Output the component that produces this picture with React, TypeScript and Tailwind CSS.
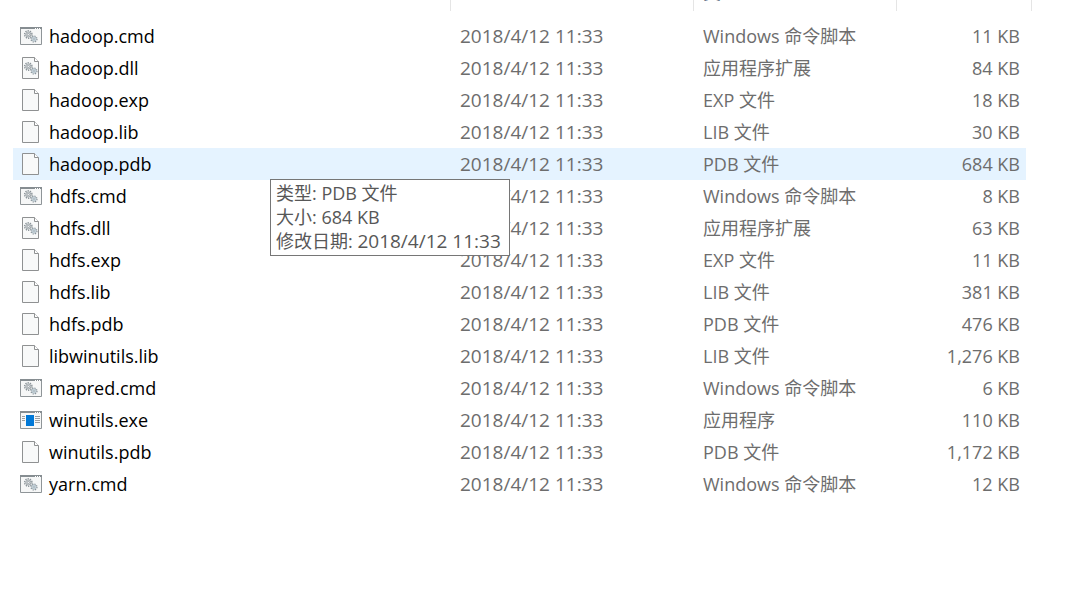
import React from 'react';

type FileKind = 'script' | 'library' | 'blank' | 'program';

interface FileRow {
  name: string;
  kind: FileKind;
  type: string;
  size: string;
}

const modified = '2018/4/12 11:33';

const files: FileRow[] = [
  { name: 'hadoop.cmd', kind: 'script', type: 'Windows 命令脚本', size: '11 KB' },
  { name: 'hadoop.dll', kind: 'library', type: '应用程序扩展', size: '84 KB' },
  { name: 'hadoop.exp', kind: 'blank', type: 'EXP 文件', size: '18 KB' },
  { name: 'hadoop.lib', kind: 'blank', type: 'LIB 文件', size: '30 KB' },
  { name: 'hadoop.pdb', kind: 'blank', type: 'PDB 文件', size: '684 KB' },
  { name: 'hdfs.cmd', kind: 'script', type: 'Windows 命令脚本', size: '8 KB' },
  { name: 'hdfs.dll', kind: 'library', type: '应用程序扩展', size: '63 KB' },
  { name: 'hdfs.exp', kind: 'blank', type: 'EXP 文件', size: '11 KB' },
  { name: 'hdfs.lib', kind: 'blank', type: 'LIB 文件', size: '381 KB' },
  { name: 'hdfs.pdb', kind: 'blank', type: 'PDB 文件', size: '476 KB' },
  { name: 'libwinutils.lib', kind: 'blank', type: 'LIB 文件', size: '1,276 KB' },
  { name: 'mapred.cmd', kind: 'script', type: 'Windows 命令脚本', size: '6 KB' },
  { name: 'winutils.exe', kind: 'program', type: '应用程序', size: '110 KB' },
  { name: 'winutils.pdb', kind: 'blank', type: 'PDB 文件', size: '1,172 KB' },
  { name: 'yarn.cmd', kind: 'script', type: 'Windows 命令脚本', size: '12 KB' },
];

const hovered = 'hadoop.pdb';

function Gears() {
  return (
    <g fill="none">
      <circle cx="8.3" cy="9.5" r="3.7" stroke="#8b9499" strokeWidth="1.4" strokeDasharray="1.3 1.02" />
      <circle cx="8.3" cy="9.5" r="2.6" fill="#d5d9db" stroke="#a0a7ab" />
      <circle cx="8.3" cy="9.5" r="1.1" fill="#f6f7f7" stroke="#8b9499" strokeWidth="0.7" />
      <circle cx="14" cy="14" r="3" stroke="#87939a" strokeWidth="1.2" strokeDasharray="1.3 1.06" />
      <circle cx="14" cy="14" r="2.2" fill="#dcecf5" stroke="#9aa6ad" strokeWidth="0.8" />
      <circle cx="14" cy="14" r="0.8" fill="#fff" stroke="#87939a" strokeWidth="0.6" />
    </g>
  );
}

function Page() {
  return (
    <>
      <path d="M2.5 0.5h12l4 4v17h-16z" fill="#f8f9f9" stroke="#8f9192" />
      <path d="M14.5 0.5v4h4" fill="#fff" stroke="#8f9192" />
    </>
  );
}

function Frame() {
  return (
    <>
      <path d="M0.5 2.5h21v17h-21z" fill="#f6f7f7" stroke="#8f9598" />
      <path d="M0 2h22v2H0z" fill="#868d91" />
      <path d="M15 3h1v1h-1zM17 3h1v1h-1zM19 3h1v1h-1z" fill="#fff" />
    </>
  );
}

function FileIcon({ kind }: { kind: FileKind }) {
  return (
    <svg width="22" height="22" viewBox="0 0 22 22" className="shrink-0" aria-hidden="true">
      {kind === 'blank' || kind === 'library' ? <Page /> : <Frame />}
      {(kind === 'script' || kind === 'library') && <Gears />}
      {kind === 'program' && (
        <>
          <path d="M6 6h8v11H6z" fill="#0078d7" />
          <path
            d="M2 7.5h3M2 9.5h3M2 11.5h3M15 7.5h5M15 9.5h5M15 11.5h5M15 13.5h5"
            stroke="#9a9ea1"
          />
        </>
      )}
    </svg>
  );
}

function Tooltip() {
  return (
    <div
      role="tooltip"
      className="absolute top-[31px] left-[257px] z-10 border border-[#767676] bg-white pt-px pr-2 pb-0.5 pl-[5px] text-lg leading-6 whitespace-nowrap text-[#575757]"
    >
      <p>类型: PDB 文件</p>
      <p>大小: 684 KB</p>
      <p>
        修改日期: <span className="text-[19px] leading-5">{modified}</span>
      </p>
    </div>
  );
}

export default function App() {
  return (
    <main className="min-h-screen bg-white pr-[37px] pl-[13px] font-['Open_Sans','Noto_Sans_CJK_SC',sans-serif] text-lg text-[#6d6d6d]">
      <table className="w-full table-fixed border-separate border-spacing-0 text-left">
        <colgroup>
          <col />
          <col className="w-[243px]" />
          <col className="w-[203px]" />
          <col className="w-[129px]" />
          <col className="w-[6px]" />
        </colgroup>
        <thead>
          <tr className="h-[11px]">
            <th className="border-r border-[#e5e5e5] p-0" />
            <th className="border-r border-[#e5e5e5] p-0" />
            <th className="border-r border-[#e5e5e5] p-0 pl-[9px] align-top font-normal text-[#1e395b]">
              <div className="flex h-[11px] items-start overflow-hidden">
                <span className="-mt-5 leading-6">类型</span>
              </div>
            </th>
            <th className="p-0" />
            <th className="border-r border-[#e5e5e5] p-0" />
          </tr>
          <tr className="h-[9px]" aria-hidden="true">
            <td colSpan={5} className="p-0" />
          </tr>
        </thead>
        <tbody>
          {files.map(file => {
            const shade = file.name === hovered ? 'bg-[#e5f3ff]' : '';
            return (
              <tr key={file.name} className="h-8 leading-8 whitespace-nowrap">
                <td className={`relative p-0 pl-[7px] ${shade}`}>
                  <div className="flex items-center gap-[7px] text-black">
                    <FileIcon kind={file.kind} />
                    {file.name}
                  </div>
                  {file.name === hovered && <Tooltip />}
                </td>
                <td className={`p-0 pl-[9px] text-[19px] ${shade}`}>{modified}</td>
                <td className={`p-0 pl-[9px] ${shade}`}>{file.type}</td>
                <td className={`p-0 pr-1.5 text-right ${shade}`}>{file.size}</td>
                <td className="p-0" />
              </tr>
            );
          })}
        </tbody>
      </table>
    </main>
  );
}
